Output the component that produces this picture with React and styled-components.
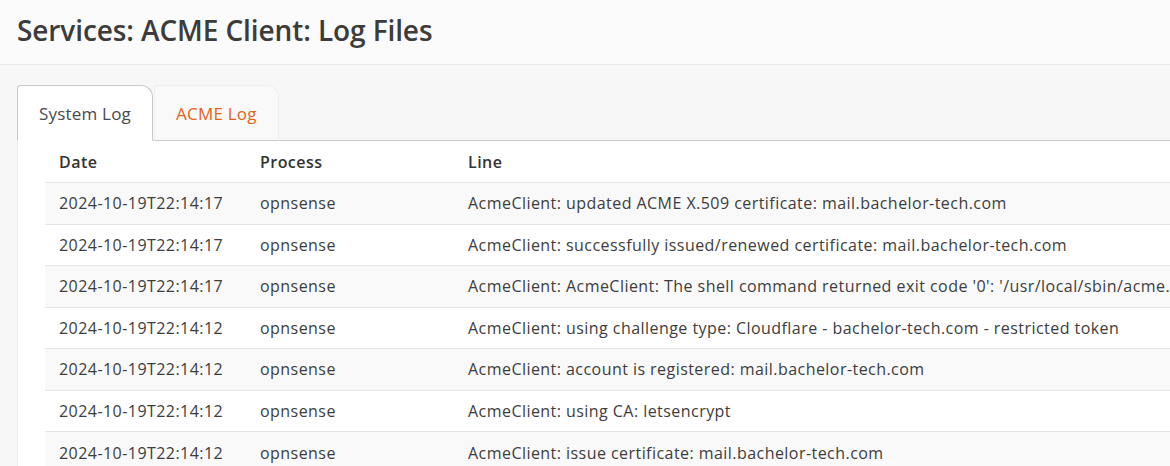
import React, { useState } from 'react';
import styled, { createGlobalStyle } from 'styled-components';

const GlobalStyle = createGlobalStyle`
  html, body {
    margin: 0;
    padding: 0;
    background: #f7f7f7;
    font-family: "Open Sans", "Noto Sans", "Liberation Sans", sans-serif;
    color: #3b3b3b;
    overflow: hidden;
  }
`;

const Page = styled.div`
  width: 1170px;
  height: 466px;
  overflow: hidden;
`;

const Header = styled.header`
  height: 65px;
  box-sizing: border-box;
  background: #fbfbfb;
  border-bottom: 1px solid #ececec;
  display: flex;
  align-items: center;
  padding: 0 17px 4px;
`;

const Title = styled.h1`
  margin: 0;
  font-size: 28px;
  font-weight: 600;
  color: #3c3c3c;
  letter-spacing: -0.1px;
`;

const Content = styled.main`
  padding: 20px 0 0 17px;
`;

const Tabs = styled.ul`
  display: flex;
  list-style: none;
  margin: 0;
  padding: 0;
  border-bottom: 1px solid #c9c9c9;
  width: 1300px;
`;

const Tab = styled.li`
  height: 56px;
  box-sizing: border-box;
  display: flex;
  align-items: center;
  padding: 0 21px;
  margin-bottom: -1px;
  margin-right: 1px;
  font-size: 17px;
  letter-spacing: 0.2px;
  cursor: pointer;
  border-radius: 4px 12px 0 0;
  border: 1px solid ${(p) => (p.$active ? '#c9c9c9' : '#efefef')};
  border-bottom: 1px solid ${(p) => (p.$active ? '#fff' : '#c9c9c9')};
  background: ${(p) => (p.$active ? '#fff' : '#f9f9f9')};
  color: ${(p) => (p.$active ? '#4a4a4a' : '#e3631c')};
`;

const Panel = styled.section`
  background: #fff;
  border-left: 1px solid #ededed;
  padding-left: 27px;
  width: 1400px;
`;

const Table = styled.table`
  border-collapse: collapse;
  width: 100%;
  font-size: 16px;
  letter-spacing: 0.45px;
  white-space: nowrap;
`;

const HeadCell = styled.th`
  text-align: left;
  font-weight: 600;
  color: #333;
  padding: 0 14px;
  height: 41px;
  width: ${(p) => p.$w || 'auto'};
`;

const Row = styled.tr`
  height: 41.5px;
  border-top: 1px solid #e6e6e6;
  background: ${(p) => (p.$striped ? '#f9f9f9' : '#fff')};
`;

const Cell = styled.td`
  padding: 0 14px;
  color: #3d3d3d;
`;

const rows = [
  ['2024-10-19T22:14:17', 'opnsense', 'AcmeClient: updated ACME X.509 certificate: mail.bachelor-tech.com'],
  ['2024-10-19T22:14:17', 'opnsense', 'AcmeClient: successfully issued/renewed certificate: mail.bachelor-tech.com'],
  ['2024-10-19T22:14:17', 'opnsense', "AcmeClient: AcmeClient: The shell command returned exit code '0': '/usr/local/sbin/acme.sh' --issue"],
  ['2024-10-19T22:14:12', 'opnsense', 'AcmeClient: using challenge type: Cloudflare - bachelor-tech.com - restricted token'],
  ['2024-10-19T22:14:12', 'opnsense', 'AcmeClient: account is registered: mail.bachelor-tech.com'],
  ['2024-10-19T22:14:12', 'opnsense', 'AcmeClient: using CA: letsencrypt'],
  ['2024-10-19T22:14:12', 'opnsense', 'AcmeClient: issue certificate: mail.bachelor-tech.com'],
];

const App = () => {
  const [tab, setTab] = useState('system');
  return (
    <>
      <GlobalStyle />
      <Page>
        <Header>
          <Title>Services: ACME Client: Log Files</Title>
        </Header>
        <Content>
          <Tabs>
            <Tab $active={tab === 'system'} onClick={() => setTab('system')}>
              System Log
            </Tab>
            <Tab $active={tab === 'acme'} onClick={() => setTab('acme')}>
              ACME Log
            </Tab>
          </Tabs>
          <Panel>
            <Table>
              <thead>
                <tr>
                  <HeadCell $w="173px">Date</HeadCell>
                  <HeadCell $w="180px">Process</HeadCell>
                  <HeadCell>Line</HeadCell>
                </tr>
              </thead>
              <tbody>
                {rows.map((r, i) => (
                  <Row key={i} $striped={i % 2 === 0}>
                    <Cell>{r[0]}</Cell>
                    <Cell>{r[1]}</Cell>
                    <Cell>{r[2]}</Cell>
                  </Row>
                ))}
              </tbody>
            </Table>
          </Panel>
        </Content>
      </Page>
    </>
  );
};

export default App;
